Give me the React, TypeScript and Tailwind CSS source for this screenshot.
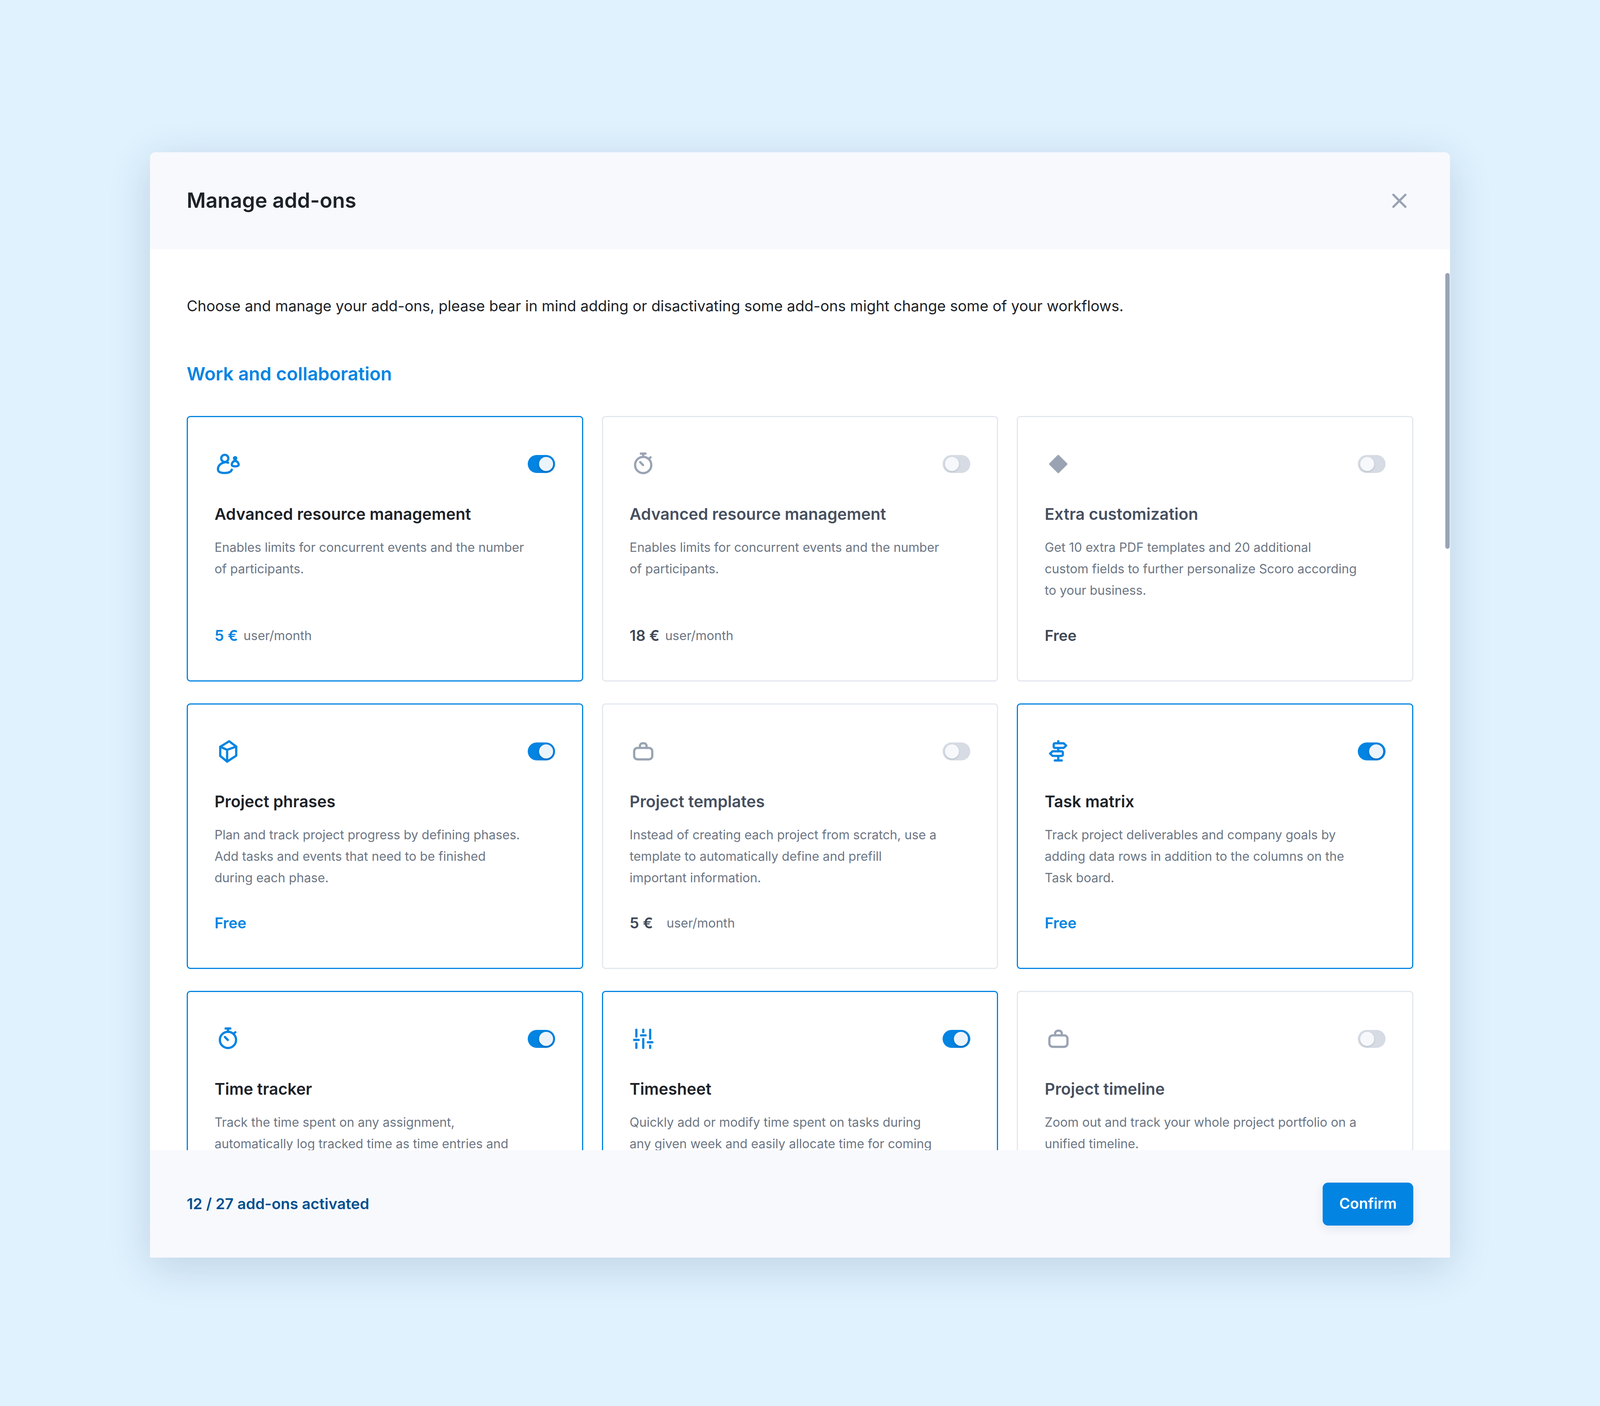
import { ReactNode } from 'react';

// horizontal sizes and fonts are in vw (1vw = 48px of the 4800 wide design), heights stay in px
const Svg = ({ children }: { children: ReactNode }) => (
  <svg viewBox="0 0 80 80" fill="none" stroke="currentColor" strokeWidth="6.67" strokeLinecap="round" strokeLinejoin="round" className="w-[1.667vw] h-[1.667vw]">
    {children}
  </svg>
);

const People = () => (
  <Svg>
    <circle cx="31" cy="23" r="10.7" />
    <path d="M41 36C30 31 10.5 40 10.5 55C10.5 64 17 66.8 30 66.8C43 66.8 50 64 52 57" />
    <circle cx="62" cy="22.7" r="6.7" fill="currentColor" stroke="none" />
    <path d="M62 31C55 31 52 38 52 42C52 46 56 47 62 47C68 47 72.7 46 72.7 42C72.7 38 69 31 62 31Z" />
  </Svg>
);

const Stopwatch = () => (
  <Svg>
    <circle cx="40.5" cy="43" r="24.3" />
    <path d="M33.5 8.7H47.5M40.5 8.7V18.5M58 23.7L62.7 20M31.5 34.3L40 43" />
  </Svg>
);

const Diamond = () => (
  <Svg>
    <path d="M40 15L65 40L40 65L15 40Z" fill="currentColor" strokeWidth="5" />
  </Svg>
);

const Cube = () => (
  <Svg>
    <path d="M44.3 9.3L65.3 25.3V52.7L38 70.3L17.3 53.3V26Z" />
    <path d="M17.3 26L38 35L65.3 25.3M38 35V70.3" />
  </Svg>
);

const Briefcase = () => (
  <Svg>
    <rect x="13.4" y="29.3" width="54.3" height="34.4" rx="10" />
    <path d="M30.7 29.3V24C30.7 19 34 15.3 39 15.3H42.4C47.4 15.3 50.7 19 50.7 24V29.3" />
  </Svg>
);

const Signpost = () => (
  <Svg>
    <path d="M30 15.3H56.3L63.7 22.3L56.3 29.3H30C27.8 29.3 26.3 27.8 26.3 25.6V19C26.3 16.8 27.8 15.3 30 15.3Z" />
    <path d="M50 39.3H23L15.7 46.3L23 53.3H50C52.2 53.3 53.7 51.8 53.7 49.6V43C53.7 40.8 52.2 39.3 50 39.3Z" />
    <path d="M40 9.3V15.3M40 29.3V39.3M40 53.3V67M29.7 67H50.3" />
  </Svg>
);

const Sliders = () => (
  <Svg>
    <path d="M20 12.3V32.7M20 53.3V66.7M13.4 43H27M40.7 12.3V19.3M40.7 40V66.7M34 29.3H47.7M61.4 12.3V39.3M61.4 60.3V66.7M54.4 50H68" />
  </Svg>
);

const Toggle = ({ on }: { on: boolean }) => (
  <div className={`w-[1.729vw] h-[1.146vw] rounded-full flex items-center px-[0.146vw] ${on ? 'bg-[#0284e2] justify-end' : 'bg-[#d6dbe4] justify-start'}`}>
    <div className={`w-[0.875vw] h-[0.875vw] rounded-full ${on ? 'bg-[#ecf4fb] shadow-[0_3px_6px_rgba(0,40,90,0.3)]' : 'bg-[#f6f8fb] shadow-[0_2px_4px_rgba(60,70,90,0.2)]'}`} />
  </div>
);

type Addon = {
  icon: ReactNode;
  title: string;
  lines: string[];
  price?: string;
  unit?: boolean;
  wide?: boolean;
  on: boolean;
};

const addons: Addon[] = [
  { icon: <People />, title: 'Advanced resource management', lines: ['Enables limits for concurrent events and the number', 'of participants.'], price: '5 €', unit: true, on: true },
  { icon: <Stopwatch />, title: 'Advanced resource management', lines: ['Enables limits for concurrent events and the number', 'of participants.'], price: '18 €', unit: true, on: false },
  { icon: <Diamond />, title: 'Extra customization', lines: ['Get 10 extra PDF templates and 20 additional', 'custom fields to further personalize Scoro according', 'to your business.'], price: 'Free', on: false },
  { icon: <Cube />, title: 'Project phrases', lines: ['Plan and track project progress by defining phases.', 'Add tasks and events that need to be finished', 'during each phase.'], price: 'Free', on: true },
  { icon: <Briefcase />, title: 'Project templates', lines: ['Instead of creating each project from scratch, use a', 'template to automatically define and prefill', 'important information.'], price: '5 €', unit: true, wide: true, on: false },
  { icon: <Signpost />, title: 'Task matrix', lines: ['Track project deliverables and company goals by', 'adding data rows in addition to the columns on the', 'Task board.'], price: 'Free', on: true },
  { icon: <Stopwatch />, title: 'Time tracker', lines: ['Track the time spent on any assignment,', 'automatically log tracked time as time entries and'], on: true },
  { icon: <Sliders />, title: 'Timesheet', lines: ['Quickly add or modify time spent on tasks during', 'any given week and easily allocate time for coming'], on: true },
  { icon: <Briefcase />, title: 'Project timeline', lines: ['Zoom out and track your whole project portfolio on a', 'unified timeline.'], on: false },
];

const AddonCard = ({ addon }: { addon: Addon }) => (
  <div className={`h-[680px] rounded-[9px] border-[3px] bg-white px-[1.667vw] pt-[80px] pb-[81px] flex flex-col ${addon.on ? 'border-[#0284e2]' : 'border-[#e3e7ef]'}`}>
    <div className="flex items-center justify-between h-[80px]">
      <div className={addon.on ? 'text-[#0284e2]' : 'text-[#99a3b3]'}>{addon.icon}</div>
      <Toggle on={addon.on} />
    </div>
    <h3 className={`mt-[55px] text-[1vw] leading-[66px] font-semibold ${addon.on ? 'text-[#1d2228]' : 'text-[#475060]'}`}>{addon.title}</h3>
    <p className="mt-[25px] text-[0.785vw] leading-[55px] text-[#6c7684]">
      {addon.lines.map((line) => (
        <span key={line} className="block whitespace-nowrap">{line}</span>
      ))}
    </p>
    {addon.price && (
      <div className="mt-auto flex items-center h-[66px]">
        <span className={`text-[0.9375vw] font-semibold ${addon.on ? 'text-[#0284e2]' : 'text-[#3f4856]'}`}>{addon.price}</span>
        {addon.unit && <span className={`text-[0.792vw] text-[#6c7684] ${addon.wide ? 'ml-[0.85vw]' : 'ml-[0.35vw]'}`}>user/month</span>}
      </div>
    )}
  </div>
);

export default function App() {
  return (
    <div className="min-h-screen bg-[#e0f2fe] pt-[390px] pl-[9.375vw] font-['Inter',sans-serif]">
      <div className="relative w-[81.25vw] h-[2830px] flex flex-col rounded-t-[14px] bg-white shadow-[0_24px_110px_rgba(0,45,95,0.16)]">
        <header className="h-[248px] shrink-0 rounded-t-[14px] bg-[#f8f9fd] px-[2.292vw] flex items-center justify-between">
          <h1 className="text-[1.292vw] font-semibold text-[#1d2228]">Manage add-ons</h1>
          <svg viewBox="0 0 80 80" fill="none" stroke="#99a3b3" strokeWidth="6.67" strokeLinecap="round" className="w-[1.667vw] h-[1.667vw]">
            <path d="M20 22L56 58M56 22L20 58" />
          </svg>
        </header>

        <div className="flex-1 overflow-hidden px-[2.292vw] pt-[118px]">
          <p className="text-[0.929vw] leading-[55px] text-[#1d2228]">
            Choose and manage your add-ons, please bear in mind adding or disactivating some add-ons might change some of your workflows.
          </p>
          <h2 className="mt-[111px] text-[1.146vw] leading-[70px] font-semibold text-[#0284e2]">Work and collaboration</h2>
          <div className="mt-[73px] grid grid-cols-3 gap-x-[1.167vw] gap-y-[56px]">
            {addons.map((addon, i) => (
              <AddonCard key={i} addon={addon} />
            ))}
          </div>
        </div>

        {/* scrollbar thumb */}
        <div className="absolute right-[1px] top-[309px] w-[0.271vw] h-[706px] rounded-full bg-[#99a3b3]" />

        <footer className="h-[275px] shrink-0 bg-[#f8f9fd] px-[2.292vw] flex items-center justify-between">
          <span className="text-[0.9375vw] font-semibold text-[#00508f]">12 / 27 add-ons activated</span>
          <button className="w-[5.667vw] h-[110px] rounded-[14px] bg-[#0284e2] text-white text-[0.917vw] font-semibold shadow-[0_8px_24px_rgba(0,60,120,0.1)]">Confirm</button>
        </footer>
      </div>
    </div>
  );
}
